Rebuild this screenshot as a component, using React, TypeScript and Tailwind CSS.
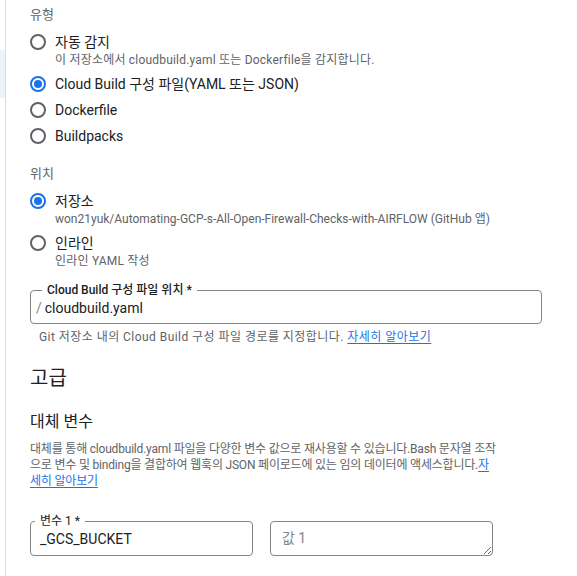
import React from 'react';

type RadioProps = { checked?: boolean; label: string; sub?: string; subTight?: boolean };

const Radio: React.FC<RadioProps> = ({ checked, label, sub, subTight }) => (
  <div className="flex items-start py-[3px]">
    <div className="h-[20px] w-[16px] flex items-center shrink-0">
      {checked ? (
        <div className="w-[16px] h-[16px] rounded-full border-2 border-[#1a73e8] flex items-center justify-center">
          <div className="w-[8px] h-[8px] rounded-full bg-[#1a73e8]" />
        </div>
      ) : (
        <div className="w-[16px] h-[16px] rounded-full border-2 border-[#5f6368]" />
      )}
    </div>
    <div className="ml-[9px]">
      <div className="text-[14px] leading-[20px] text-[#202124]">{label}</div>
      {sub && (
        <div className={subTight ? 'text-[12px] leading-[16px] text-[#5f6368]' : 'text-[12px] leading-[16px] tracking-[0.2px] text-[#5f6368]'}>
          {sub}
        </div>
      )}
    </div>
  </div>
);

const App: React.FC = () => {
  return (
    <div className="flex w-full h-[576px] overflow-hidden bg-white font-['Roboto','Noto_Sans_CJK_KR',sans-serif]">
      {/* left nav edge */}
      <div className="w-[5px] shrink-0 border-r border-[#dadce0] box-content pt-[50px]">
        <div className="h-[48px] bg-[#edf2fc]" />
      </div>

      <div className="flex-1 pl-6 pt-[5px] flex flex-col">
        <div className="text-[13px] leading-[20px] text-[#5f6368]">유형</div>
        <div className="mt-[4px] flex flex-col">
          <Radio label="자동 감지" sub="이 저장소에서 cloudbuild.yaml 또는 Dockerfile을 감지합니다." />
          <Radio checked label="Cloud Build 구성 파일(YAML 또는 JSON)" />
          <Radio label="Dockerfile" />
          <Radio label="Buildpacks" />
        </div>

        <div className="mt-[15px] text-[13px] leading-[20px] text-[#5f6368]">위치</div>
        <div className="mt-[4px] flex flex-col">
          <Radio checked subTight label="저장소" sub="won21yuk/Automating-GCP-s-All-Open-Firewall-Checks-with-AIRFLOW (GitHub 앱)" />
          <Radio label="인라인" sub="인라인 YAML 작성" />
        </div>

        <fieldset className="mt-[10px] w-[512px] border border-[#80868b] rounded-[4px] px-0 pb-[5px]">
          <legend className="ml-[11px] px-[5px] text-[12px] leading-[16px] font-medium text-[#202124]">
            Cloud Build 구성 파일 위치 *
          </legend>
          <div className="flex items-center text-[14px] leading-[20px] pl-[5px]">
            <span className="text-[#80868b]">/</span>
            <span className="ml-[3px] text-[#202124]">cloudbuild.yaml</span>
          </div>
        </fieldset>
        <div className="mt-[5px] pl-[9px] text-[12px] leading-[16px] tracking-[0.45px] text-[#5f6368]">
          Git 저장소 내의 Cloud Build 구성 파일 경로를 지정합니다.{' '}
          <a className="text-[#1a73e8] underline underline-offset-2">자세히 알아보기</a>
        </div>

        <div className="mt-[19px] text-[20px] leading-[28px] text-[#202124]">고급</div>
        <div className="mt-[18px] text-[16px] leading-[24px] text-[#202124]">대체 변수</div>
        <div className="mt-[7px] text-[12px] leading-[16px] tracking-[-0.2px] text-[#5f6368] whitespace-nowrap">
          대체를 통해 cloudbuild.yaml 파일을 다양한 변수 값으로 재사용할 수 있습니다.Bash 문자열 조작
          <br />
          으로 변수 및 binding을 결합하여 웹훅의 JSON 페이로드에 있는 임의 데이터에 액세스합니다.
          <a className="text-[#1a73e8] underline underline-offset-2">자</a>
          <br />
          <a className="text-[#1a73e8] underline underline-offset-2">세히 알아보기</a>
        </div>

        <div className="mt-[24px] flex items-start gap-[17px]">
          <fieldset className="w-[223px] border border-[#80868b] rounded-[4px] px-0 pb-[6px]">
            <legend className="ml-[4px] px-[5px] text-[12px] leading-[16px] text-[#202124]">변수 1 *</legend>
            <div className="pl-[9px] text-[14px] leading-[20px] text-[#202124]">_GCS_BUCKET</div>
          </fieldset>
          <textarea
            placeholder="값 1"
            className="mt-[8px] w-[223px] h-[35px] border border-[#80868b] rounded-[4px] px-[11px] pt-[6px] text-[14px] leading-[20px] text-[#202124] placeholder:text-[#80868b] outline-none"
          />
        </div>
      </div>
    </div>
  );
};

export default App;
